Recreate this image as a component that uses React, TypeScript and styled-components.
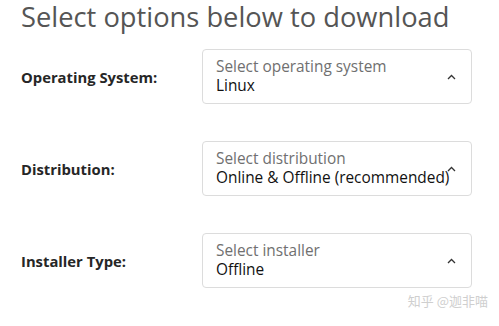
import React from "react";
import styled, { createGlobalStyle } from "styled-components";

const Global = createGlobalStyle`
  html, body { margin: 0; padding: 0; background: #fff; }
  body { font-family: "Open Sans", "Noto Sans", sans-serif; }
`;

const Page = styled.div`
  position: relative;
  width: 499px;
  height: 326px;
  overflow: hidden;
  padding: 0 0 0 21px;
  box-sizing: border-box;
`;

const Title = styled.h1`
  margin: 0;
  padding-top: 0;
  font-family: "Open Sans", sans-serif;
  font-weight: 400;
  font-size: 27.3px;
  line-height: 33px;
  color: #555;
  white-space: nowrap;
`;

const Form = styled.div`
  display: grid;
  grid-template-columns: 181px 270px;
  row-gap: 37px;
  margin-top: 16px;
  align-items: center;
`;

const Label = styled.div`
  font-family: "Open Sans", sans-serif;
  font-weight: 700;
  font-size: 14.8px;
  color: #262626;
`;

const SelectBox = styled.div`
  height: 55px;
  box-sizing: border-box;
  border: 1px solid #dcdcdc;
  border-radius: 4px;
  padding: 8px 20px 0 13px;
  position: relative;
  font-family: "Open Sans", sans-serif;
  font-size: 15.4px;
  line-height: 18px;
`;

const Placeholder = styled.div`
  color: #707070;
  white-space: nowrap;
  margin-bottom: 1px;
`;

const Value = styled.div`
  color: #111;
  white-space: nowrap;
`;

const Chevron = styled.svg`
  position: absolute;
  right: 15px;
  top: 24px;
`;

const Watermark = styled.div`
  position: absolute;
  right: 11px;
  bottom: 16px;
  font-family: "Noto Sans CJK SC", sans-serif;
  font-size: 13px;
  color: #cfcfcf;
`;

const rows = [
  { label: "Operating System:", ph: "Select operating system", value: "Linux" },
  { label: "Distribution:", ph: "Select distribution", value: "Online & Offline (recommended)" },
  { label: "Installer Type:", ph: "Select installer", value: "Offline" },
];

export default function App() {
  return (
    <>
      <Global />
      <Page>
        <Title>Select options below to download</Title>
        <Form>
          {rows.map((r) => (
            <React.Fragment key={r.label}>
              <Label>{r.label}</Label>
              <SelectBox>
                <Placeholder>{r.ph}</Placeholder>
                <Value>{r.value}</Value>
                <Chevron width="9" height="6" viewBox="0 0 9 6">
                  <path d="M1 5 L4.5 1.5 L8 5" fill="none" stroke="#333" strokeWidth="1.3" />
                </Chevron>
              </SelectBox>
            </React.Fragment>
          ))}
        </Form>
        <Watermark>知乎 @迦非喵</Watermark>
      </Page>
    </>
  );
}
